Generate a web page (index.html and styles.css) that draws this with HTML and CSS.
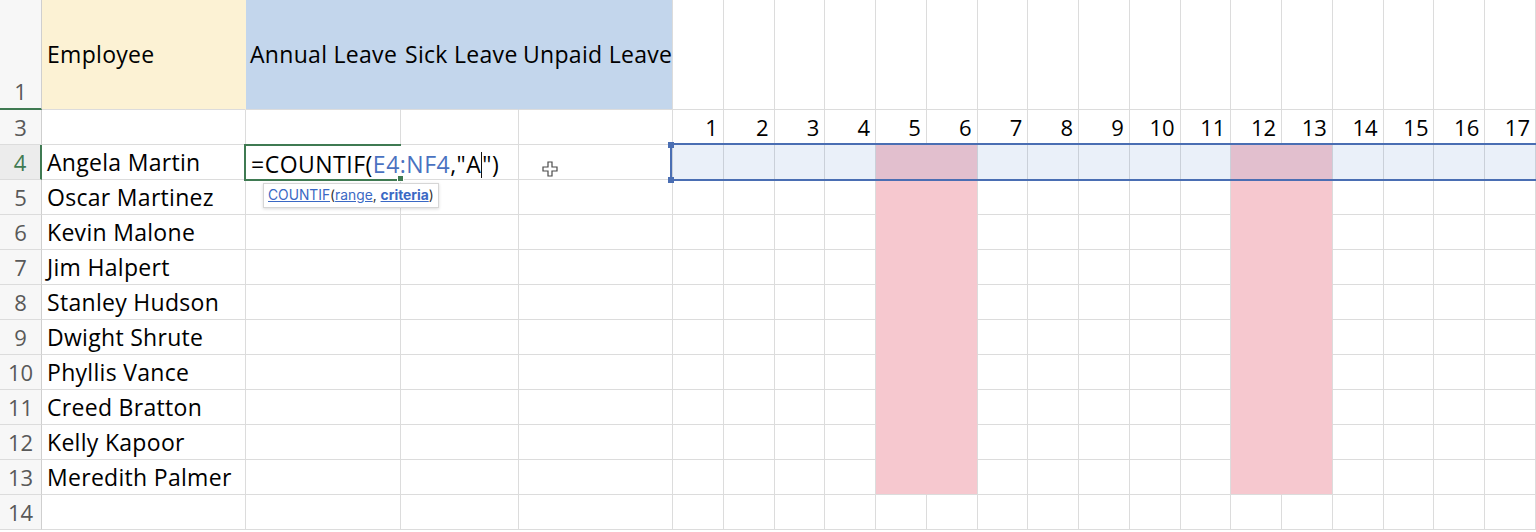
FILE: index.html
```html
<!DOCTYPE html>
<html>
<head>
<meta charset="utf-8">
<link rel="stylesheet" href="styles.css">
</head>
<body>
<div class="sheet">
  <div class="row tall">
    <div class="rh rh-hid">1</div>
    <div class="cell mid yel">Employee</div>
    <div class="cell mid blu">Annual Leave</div>
    <div class="cell mid blu">Sick Leave</div>
    <div class="cell mid blu blu-end">Unpaid Leave</div>
    <div></div><div></div><div></div><div></div><div></div><div></div><div></div><div></div><div></div><div></div><div></div><div></div><div></div><div></div><div></div><div></div><div></div>
  </div>
  <div class="row">
    <div class="rh">3</div>
    <div class="cell"></div><div class="cell"></div><div class="cell"></div><div class="cell"></div>
    <div class="num">1</div><div class="num">2</div><div class="num">3</div><div class="num">4</div><div class="num">5</div><div class="num">6</div><div class="num">7</div><div class="num">8</div><div class="num">9</div><div class="num">10</div><div class="num">11</div><div class="num">12</div><div class="num">13</div><div class="num">14</div><div class="num">15</div><div class="num">16</div><div class="num">17</div>
  </div>
  <div class="row">
    <div class="rh rh-sel">4</div>
    <div class="cell">Angela Martin</div>
    <div class="cell edit">
      <div class="editor">=COUNTIF(<span class="ref">E4:NF4</span>,"A<span class="caret"></span>")<span class="fill-handle"></span></div>
      <div class="tip"><span class="lnk">COUNTIF</span>(<span class="lnk">range</span>, <span class="lnk strong">criteria</span>)</div>
    </div>
    <div class="cell"></div><div class="cell"></div>
    <div></div><div></div><div></div><div></div><div class="pk pl"></div><div class="pk"></div><div></div><div></div><div></div><div></div><div></div><div class="pk pl"></div><div class="pk"></div><div></div><div></div><div></div><div></div>
  </div>
  <div class="row">
    <div class="rh">5</div>
    <div class="cell">Oscar Martinez</div><div class="cell"></div><div class="cell"></div><div class="cell"></div>
    <div></div><div></div><div></div><div></div><div class="pk pl"></div><div class="pk"></div><div></div><div></div><div></div><div></div><div></div><div class="pk pl"></div><div class="pk"></div><div></div><div></div><div></div><div></div>
  </div>
  <div class="row">
    <div class="rh">6</div>
    <div class="cell">Kevin Malone</div><div class="cell"></div><div class="cell"></div><div class="cell"></div>
    <div></div><div></div><div></div><div></div><div class="pk pl"></div><div class="pk"></div><div></div><div></div><div></div><div></div><div></div><div class="pk pl"></div><div class="pk"></div><div></div><div></div><div></div><div></div>
  </div>
  <div class="row">
    <div class="rh">7</div>
    <div class="cell">Jim Halpert</div><div class="cell"></div><div class="cell"></div><div class="cell"></div>
    <div></div><div></div><div></div><div></div><div class="pk pl"></div><div class="pk"></div><div></div><div></div><div></div><div></div><div></div><div class="pk pl"></div><div class="pk"></div><div></div><div></div><div></div><div></div>
  </div>
  <div class="row">
    <div class="rh">8</div>
    <div class="cell">Stanley Hudson</div><div class="cell"></div><div class="cell"></div><div class="cell"></div>
    <div></div><div></div><div></div><div></div><div class="pk pl"></div><div class="pk"></div><div></div><div></div><div></div><div></div><div></div><div class="pk pl"></div><div class="pk"></div><div></div><div></div><div></div><div></div>
  </div>
  <div class="row">
    <div class="rh">9</div>
    <div class="cell">Dwight Shrute</div><div class="cell"></div><div class="cell"></div><div class="cell"></div>
    <div></div><div></div><div></div><div></div><div class="pk pl"></div><div class="pk"></div><div></div><div></div><div></div><div></div><div></div><div class="pk pl"></div><div class="pk"></div><div></div><div></div><div></div><div></div>
  </div>
  <div class="row">
    <div class="rh">10</div>
    <div class="cell">Phyllis Vance</div><div class="cell"></div><div class="cell"></div><div class="cell"></div>
    <div></div><div></div><div></div><div></div><div class="pk pl"></div><div class="pk"></div><div></div><div></div><div></div><div></div><div></div><div class="pk pl"></div><div class="pk"></div><div></div><div></div><div></div><div></div>
  </div>
  <div class="row">
    <div class="rh">11</div>
    <div class="cell">Creed Bratton</div><div class="cell"></div><div class="cell"></div><div class="cell"></div>
    <div></div><div></div><div></div><div></div><div class="pk pl"></div><div class="pk"></div><div></div><div></div><div></div><div></div><div></div><div class="pk pl"></div><div class="pk"></div><div></div><div></div><div></div><div></div>
  </div>
  <div class="row">
    <div class="rh">12</div>
    <div class="cell">Kelly Kapoor</div><div class="cell"></div><div class="cell"></div><div class="cell"></div>
    <div></div><div></div><div></div><div></div><div class="pk pl"></div><div class="pk"></div><div></div><div></div><div></div><div></div><div></div><div class="pk pl"></div><div class="pk"></div><div></div><div></div><div></div><div></div>
  </div>
  <div class="row">
    <div class="rh">13</div>
    <div class="cell">Meredith Palmer</div><div class="cell"></div><div class="cell"></div><div class="cell"></div>
    <div></div><div></div><div></div><div></div><div class="pk pl pk-last"></div><div class="pk pk-last"></div><div></div><div></div><div></div><div></div><div></div><div class="pk pl pk-last"></div><div class="pk pk-last"></div><div></div><div></div><div></div><div></div>
  </div>
  <div class="row">
    <div class="rh">14</div>
    <div class="cell"></div><div class="cell"></div><div class="cell"></div><div class="cell"></div>
    <div></div><div></div><div></div><div></div><div></div><div></div><div></div><div></div><div></div><div></div><div></div><div></div><div></div><div></div><div></div><div></div><div></div>
  </div>

  <div class="selection"><span class="handle h-top"></span><span class="handle h-bot"></span></div>
  <svg class="pointer" width="16" height="16" viewBox="0 0 16 16"><polygon points="6,1 10,1 10,6 15,6 15,10 10,10 10,15 6,15 6,10 1,10 1,6 6,6" fill="#fff" stroke="#4a4a4a" stroke-width="1.2"/></svg>
</div>
</body>
</html>
```

FILE: styles.css
```css
html, body {
  margin: 0;
  padding: 0;
  background: #fff;
}

.sheet {
  position: relative;
  width: 1536px;
  height: 532px;
  overflow: hidden;
  font-family: "Open Sans", "Liberation Sans", sans-serif;
  font-size: 22px;
  color: #000;
}

.row {
  display: grid;
  grid-template-columns: 42px 204px 155px 118px 154px repeat(17, 1fr);
  height: 35px;
}

.row.tall {
  height: 110px;
}

.row > div {
  box-sizing: border-box;
  border-right: 1px solid #dcdcdc;
  border-bottom: 1px solid #dcdcdc;
  display: flex;
  align-items: flex-end;
  padding: 0 4px 5px 5px;
  white-space: nowrap;
  line-height: 24px;
  min-width: 0;
}

.row > .cell {
  font-size: 23px;
  letter-spacing: 0.3px;
}

.row > .rh {
  justify-content: center;
  background: #f7f7f7;
  color: #595959;
  border-right-color: #cfcfcf;
  padding: 0 0 5px 0;
}

.row > .rh-hid {
  border-bottom: 2px solid #3f7a52;
}

.row > .rh-sel {
  background: #ececec;
  color: #3f7a52;
  border-right: 2px solid #3f7a52;
}

.row > .mid {
  align-items: center;
  padding-bottom: 2px;
}

.row > .yel {
  background: #fcf2d4;
  border-right-color: #fcf2d4;
}

.row > .blu {
  background: #c3d6ec;
  border-right-color: #c3d6ec;
  padding-left: 4px;
}

.row > .blu-end {
  border-right-color: #dcdcdc;
}

.row > .num {
  justify-content: flex-end;
  padding-right: 5px;
}

.row > .pk {
  background: #f6c8cf;
  border-bottom-color: #f6c8cf;
}

.row > .pl {
  border-right-color: #f6c8cf;
}

.row > .pk-last {
  border-bottom-color: #dcdcdc;
}

.row > .edit {
  position: relative;
  overflow: visible;
  border-right-color: transparent;
  z-index: 2;
}

.editor {
  position: absolute;
  left: -2px;
  top: -1px;
  width: 157px;
  height: 37px;
  box-sizing: border-box;
  border: 2px solid #3f7a52;
  border-right: none;
  padding: 0 0 3px 5px;
  display: flex;
  align-items: flex-end;
  white-space: nowrap;
  line-height: 24px;
  letter-spacing: 0.5px;
}

.ref {
  color: #4a72c0;
}

.caret {
  display: inline-block;
  width: 0;
  height: 26px;
  border-left: 1px solid #111;
  margin: 0 0 -2px 0;
  vertical-align: bottom;
}

.fill-handle {
  position: absolute;
  right: -3px;
  bottom: -3px;
  width: 5px;
  height: 5px;
  background: #3f7a52;
  border: 1px solid #fff;
}

.tip {
  position: absolute;
  left: 17px;
  top: 38px;
  height: 25px;
  box-sizing: border-box;
  padding: 0 4px;
  background: #fff;
  border: 1px solid #d6d6d6;
  box-shadow: 0 1px 3px rgba(0, 0, 0, 0.15);
  font-family: "Inter", "Noto Sans", sans-serif;
  font-size: 13.8px;
  line-height: 23px;
  color: #333;
  white-space: nowrap;
  letter-spacing: 0;
}

.lnk {
  color: #3a68c4;
  text-decoration: underline;
}

.lnk.strong {
  font-weight: 700;
}

.selection {
  position: absolute;
  left: 670px;
  top: 143px;
  width: 900px;
  height: 38px;
  box-sizing: border-box;
  border: 2px solid #4a6eb3;
  background: rgba(66, 120, 201, 0.11);
  z-index: 1;
}

.handle {
  position: absolute;
  left: -4px;
  width: 6px;
  height: 6px;
  background: #4a6eb3;
}

.h-top {
  top: -3px;
}

.h-bot {
  bottom: -4px;
}

.pointer {
  position: absolute;
  left: 542px;
  top: 161px;
  z-index: 3;
}
```
